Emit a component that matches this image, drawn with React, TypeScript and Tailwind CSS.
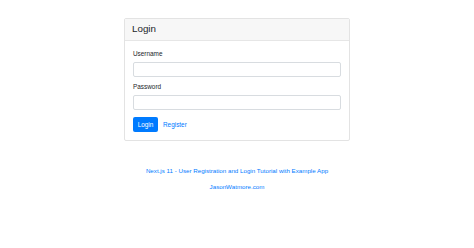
export default function App() {
  return (
    <div className="w-[474px] h-[248px] overflow-hidden bg-white pt-[18px] font-['Liberation_Sans',Arial,sans-serif] text-[#212529]">
      <div className="mx-auto w-[226px] rounded-[2px] border border-[#e3e3e3]">
        <div className="flex h-[22px] items-center border-b border-[#e6e6e6] bg-[#f7f7f7] px-[7px] text-[9.8px]">
          Login
        </div>
        <div className="px-[8px] pt-[8px] pb-[8px]">
          <div className="text-[6.4px] leading-[10px]">Username</div>
          <div className="mt-[3px] h-[15px] rounded-[2px] border border-[#d8dce0]" />
          <div className="mt-[5px] text-[6.4px] leading-[10px]">Password</div>
          <div className="mt-[3px] h-[15px] rounded-[2px] border border-[#d8dce0]" />
          <div className="mt-[7px] flex items-center gap-[5px]">
            <button className="h-[15px] w-[25px] rounded-[2px] bg-[#007bff] text-[6.4px] text-white">
              Login
            </button>
            <a className="text-[6.4px] text-[#007bff]">Register</a>
          </div>
        </div>
      </div>
      <div className="mt-[25px] text-center text-[6.2px] leading-[10px] text-[#007bff]">
        <p>Next.js 11 - User Registration and Login Tutorial with Example App</p>
        <p className="mt-[6px]">JasonWatmore.com</p>
      </div>
    </div>
  );
}
